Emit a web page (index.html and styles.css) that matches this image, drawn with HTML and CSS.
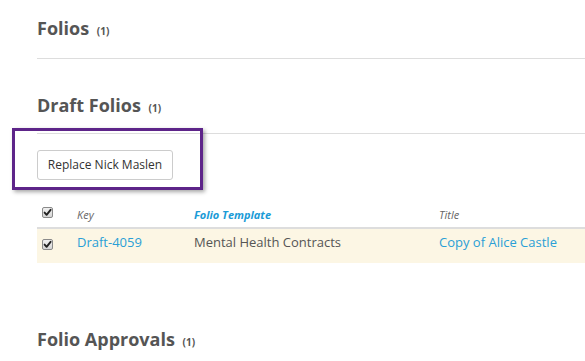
FILE: index.html
```html
<!DOCTYPE html>
<html>
<head>
<meta charset="utf-8">
<link rel="stylesheet" href="styles.css">
</head>
<body>
<div class="page">
  <section class="section">
    <h2 class="heading heading-first">Folios <span class="count">(1)</span></h2>
  </section>
  <section class="section">
    <h2 class="heading heading-draft">Draft Folios <span class="count">(1)</span></h2>
    <div class="actions">
      <button class="btn">Replace Nick Maslen</button>
    </div>
    <table class="grid">
      <thead>
        <tr>
          <th class="col-cb"><span class="cb"><svg viewBox="0 0 11 11" width="11" height="11"><path d="M2.6 5.6 L4.6 7.8 L8.6 2.8" fill="none" stroke="#222" stroke-width="1.9" stroke-linecap="round" stroke-linejoin="round"/></svg></span></th>
          <th class="col-key">Key</th>
          <th class="col-tpl sorted">Folio Template</th>
          <th class="col-title">Title</th>
        </tr>
      </thead>
      <tbody>
        <tr class="selected">
          <td class="col-cb"><span class="cb"><svg viewBox="0 0 11 11" width="11" height="11"><path d="M2.6 5.6 L4.6 7.8 L8.6 2.8" fill="none" stroke="#222" stroke-width="1.9" stroke-linecap="round" stroke-linejoin="round"/></svg></span></td>
          <td class="col-key"><a class="link" href="#">Draft-4059</a></td>
          <td class="col-tpl">Mental Health Contracts</td>
          <td class="col-title"><a class="link" href="#">Copy of Alice Castle</a></td>
        </tr>
      </tbody>
    </table>
  </section>
  <section class="section">
    <h2 class="heading heading-approvals">Folio Approvals <span class="count">(1)</span></h2>
  </section>
  <div class="highlight"></div>
</div>
</body>
</html>
```

FILE: styles.css
```css
html, body {
  margin: 0;
  padding: 0;
  background: #fff;
}
body {
  font-family: "Open Sans", "Liberation Sans", sans-serif;
  color: #555;
  width: 585px;
  height: 361px;
  overflow: hidden;
}
.page {
  position: relative;
  padding-left: 37px;
}
.heading {
  margin: 0;
  font-size: 18px;
  line-height: 20px;
  font-weight: 700;
  color: #555;
}
.count {
  font-size: 10px;
  line-height: 10px;
  font-weight: 700;
  margin-left: 3px;
}
.heading-first {
  padding-top: 18px;
  padding-bottom: 20px;
  border-bottom: 1px solid #ddd;
}
.heading-draft {
  margin-top: 36px;
  padding-bottom: 18px;
  border-bottom: 1px solid #ddd;
}
.heading-approvals {
  margin-top: 66px;
}
.actions {
  padding-top: 16px;
  line-height: 0;
}
.btn {
  font-family: "Open Sans", "Liberation Sans", sans-serif;
  font-size: 12px;
  line-height: 16px;
  color: #333;
  background: #fff;
  border: 1px solid #ccc;
  border-radius: 3px;
  height: 30px;
  width: 136px;
  padding: 0;
  margin: 0;
  vertical-align: top;
}
.grid {
  margin-top: 18px;
  width: 548px;
  border-collapse: collapse;
}
.grid th {
  font-size: 11px;
  line-height: 15px;
  font-style: italic;
  font-weight: 400;
  color: #666;
  text-align: left;
  padding: 9px 0 5px;
  vertical-align: top;
  border-bottom: 2px solid #ddd;
}
.grid th.sorted {
  color: #1a9bd7;
  font-weight: 700;
}
.grid td {
  font-size: 13px;
  line-height: 18px;
  padding: 4px 0 12px;
  vertical-align: top;
}
.selected {
  background: #fcf6e4;
}
.col-cb {
  width: 40px;
  padding-left: 5px !important;
  box-sizing: border-box;
}
.grid td.col-cb {
  padding-top: 10px;
}
.col-key {
  width: 117px;
}
.col-tpl {
  width: 245px;
}
.cb {
  display: block;
  width: 11px;
  height: 11px;
  box-sizing: border-box;
  border: 1px solid #8a8a8a;
  border-radius: 2px;
  background: linear-gradient(#f0f0f0, #d6d6d6);
  position: relative;
}
.cb svg {
  position: absolute;
  left: -1px;
  top: -1px;
}
.link {
  color: #2a9fd6;
  text-decoration: none;
}
.highlight {
  position: absolute;
  left: 12px;
  top: 128px;
  width: 191px;
  height: 62px;
  box-sizing: border-box;
  border: 3px solid #5d2489;
  box-shadow: 2px 2px 4px rgba(0, 0, 0, 0.35);
}
```
